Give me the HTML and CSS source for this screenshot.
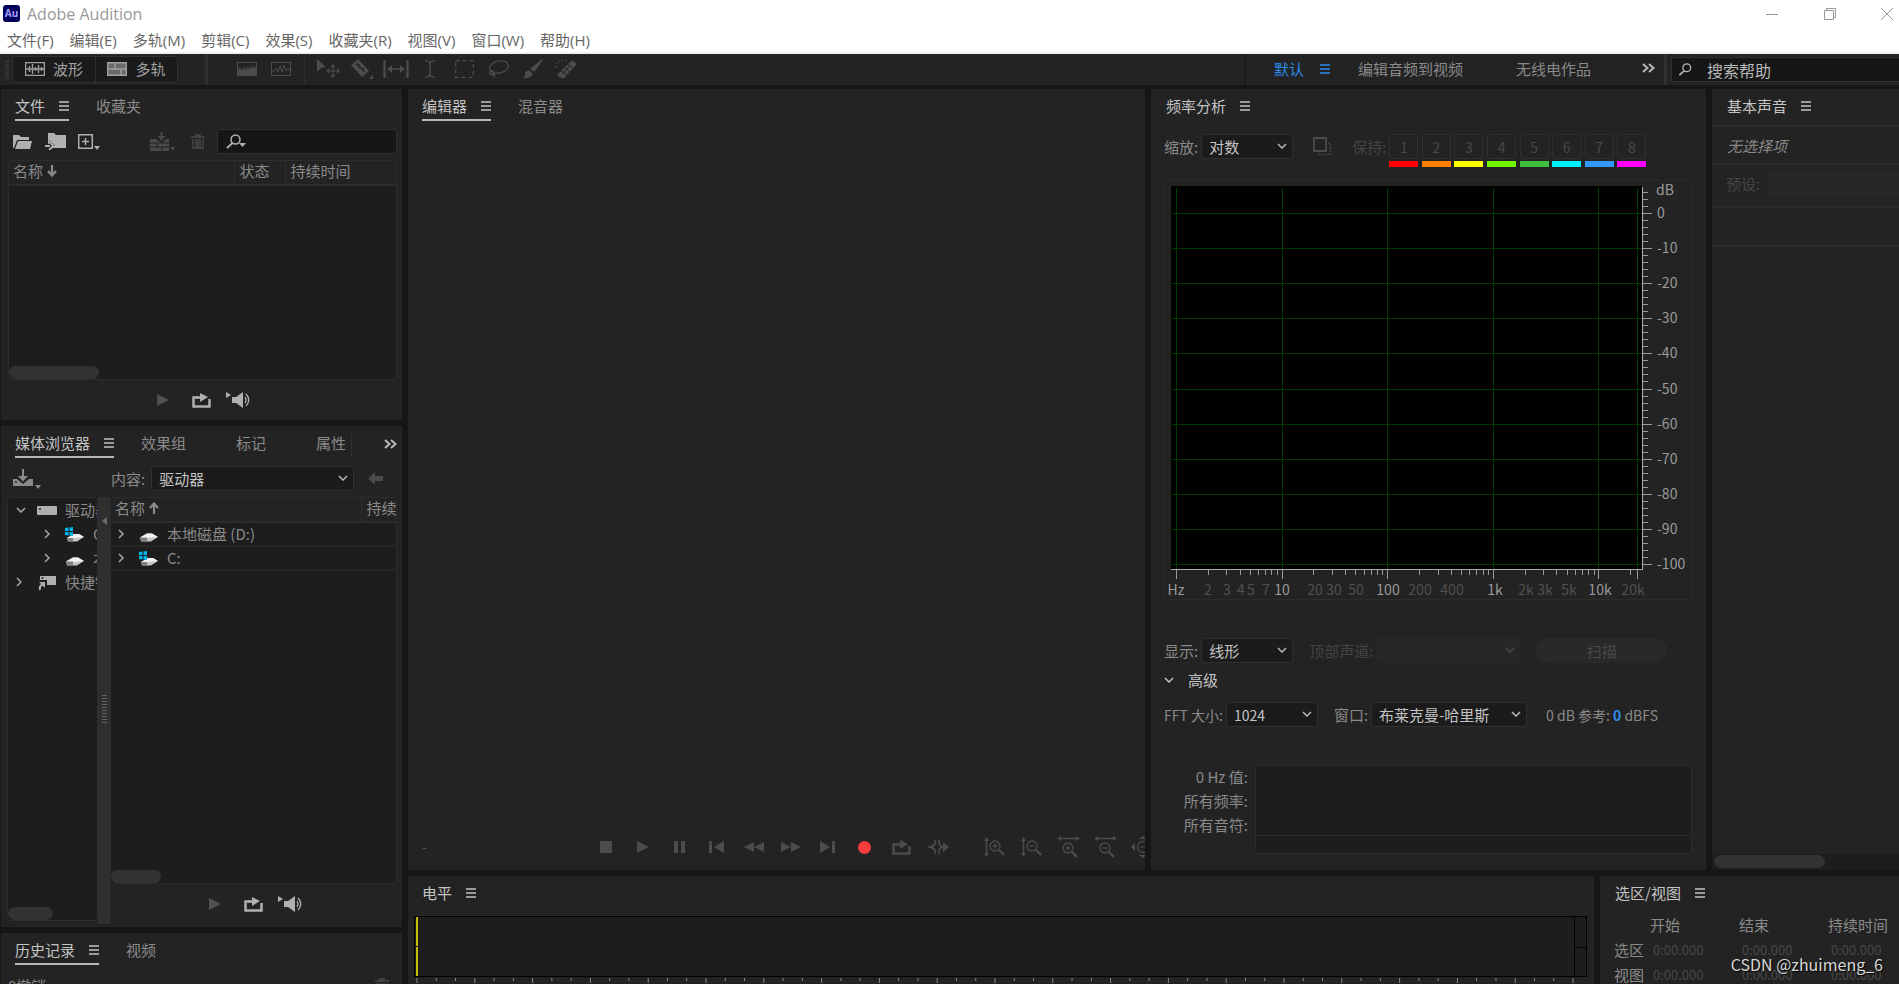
FILE: index.html
```html
<!DOCTYPE html>
<html lang="zh-CN">
<head>
  <meta charset="UTF-8" />
  <meta name="viewport" content="width=device-width, initial-scale=1.0"/>
  <title>Adobe Audition</title>
  <link rel="stylesheet" href="styles.css">
</head>
<body>
  <!-- icon set -->
  <svg class="icon-defs" aria-hidden="true">
    <symbol id="i-menu" viewBox="0 0 10 10"><path d="M0 1h10M0 5h10M0 9h10" stroke="currentColor" stroke-width="1.6"/></symbol>
    <symbol id="i-down" viewBox="0 0 10 6"><path d="M1 1l4 4 4-4" fill="none" stroke="currentColor" stroke-width="1.5"/></symbol>
    <symbol id="i-right" viewBox="0 0 6 10"><path d="M1 1l4 4-4 4" fill="none" stroke="currentColor" stroke-width="1.5"/></symbol>
    <symbol id="i-more" viewBox="0 0 13 10"><path d="M1 1l4.500 4L1 9M7 1l4.500 4L7 9" fill="none" stroke="currentColor" stroke-width="2"/></symbol>
    <symbol id="i-search" viewBox="0 0 15 15"><circle cx="9.500" cy="5.500" r="4.500" fill="none" stroke="currentColor" stroke-width="1.5"/><path d="M6.500 9L1 14" stroke="currentColor" stroke-width="1.800"/></symbol>
    <symbol id="i-play" viewBox="0 0 12 12"><path d="M0 0l12 6-12 6z" fill="currentColor"/></symbol>
    <symbol id="i-loop" viewBox="0 0 19 15"><path d="M6 4.500H1.500v9h16V6" fill="none" stroke="currentColor" stroke-width="2.500"/><path d="M4 4.500h5" stroke="currentColor" stroke-width="2.500"/><path d="M8 0l8 4-8 5z" fill="currentColor"/></symbol>
    <symbol id="i-speaker" viewBox="0 0 26 16"><path d="M0 0l5 3-5 3zM6 5h4l7-5v16l-7-5H6z" fill="currentColor"/><path d="M19 5q2 3 0 6M20 2q5.500 6 0 12" fill="none" stroke="currentColor" stroke-width="1.300"/></symbol>
    <symbol id="i-trash" viewBox="0 0 14 15"><path d="M0 3h14M5 3V1h4v2M2 5v9h10V5M5 5v8M7 5v8M9 5v8" fill="none" stroke="currentColor" stroke-width="1.300"/></symbol>
    <symbol id="i-drive" viewBox="0 0 20 9"><rect width="20" height="9" rx="1" fill="currentColor"/><circle cx="3" cy="3" r="1" fill="#222"/></symbol>
    <symbol id="i-disk" viewBox="0 0 20 15"><path d="M1 10.500l7-4h5l6 3.500-7 4.500H2z" fill="#c4c4c4"/><path d="M1 10.500l7-4h5l6 3.500-10 1z" fill="#f2f2f2"/><path d="M1 10.500h7v4H2z" fill="#808080"/></symbol>
    <symbol id="i-windisk" viewBox="0 0 20 15"><path d="M2 11l7-4h5l5 3-7 4.500H3z" fill="#c4c4c4"/><path d="M2 11l7-4h5l5 3-9 1z" fill="#f2f2f2"/><path d="M2 11h6v3.500H3z" fill="#808080"/><path d="M0 1l3.500-.500V4H0zM4.500.400L8 0v4H4.500zM0 5h3.500v3.500L0 8zM4.500 5H8v4l-3.500-.500z" fill="#00b4f0"/></symbol>
    <symbol id="i-zoom" viewBox="0 0 16 16"><circle cx="6" cy="6" r="5" fill="none" stroke="currentColor" stroke-width="1.300"/><path d="M3.500 6h5" stroke="currentColor" stroke-width="1.300"/><path d="M10 10l5 5" stroke="currentColor" stroke-width="2.400"/></symbol>
    <symbol id="i-vert" viewBox="0 0 5 20"><path d="M2.500 2v16" stroke="currentColor" stroke-width="1.500"/><path d="M0 4l2.500-4L5 4zM0 16l2.500 4L5 16z" fill="currentColor"/></symbol>
    <symbol id="i-horiz" viewBox="0 0 23 5"><path d="M2 2.500h19" stroke="currentColor" stroke-width="1.500"/><path d="M4 0L0 2.500 4 5zM19 0l4 2.500L19 5z" fill="currentColor"/></symbol>
  </svg>

  <header class="titlebar">
    <svg class="logo" viewBox="0 0 17 17"><rect width="17" height="17" rx="3" fill="#00005b"/><text x="8.500" y="12" text-anchor="middle" font-size="10" font-weight="700" fill="#a5a0ff">Au</text></svg>
    <h1>Adobe Audition</h1>
    <div class="window-buttons">
      <button aria-label="最小化"><svg width="12" height="14"><path d="M0 7.500h12" stroke="currentColor"/></svg></button>
      <button aria-label="还原"><svg width="12" height="12" fill="none" stroke="currentColor"><path d="M.500 2.500h9v9h-9zM2.500 2.500v-2h9v9h-2"/></svg></button>
      <button aria-label="关闭"><svg width="12" height="12" stroke="currentColor"><path d="M0 0l12 12M12 0L0 12"/></svg></button>
    </div>
  </header>

  <nav class="menubar">
    <button>文件(F)</button>
    <button>编辑(E)</button>
    <button>多轨(M)</button>
    <button>剪辑(C)</button>
    <button>效果(S)</button>
    <button>收藏夹(R)</button>
    <button>视图(V)</button>
    <button>窗口(W)</button>
    <button>帮助(H)</button>
  </nav>

  <div class="toolbar">
    <span class="grip"></span>
    <div class="view-toggle">
      <button><svg width="20" height="14" fill="none" stroke="currentColor"><rect x=".500" y=".500" width="19" height="13" stroke-width="1.500"/><path d="M1 7h18M4.500 4v6M7.500 2v10M10.500 5v4M13.500 3v8M16.500 5v4" stroke-width="1.400"/></svg>波形</button>
      <button><svg width="20" height="14"><path d="M0 0h20v14H0z" fill="currentColor" opacity=".600"/><path d="M.700.700h18.600v12.600H.700zM1 7h18M8 1v6M14 7v6" fill="none" stroke="currentColor" stroke-width="1.400"/></svg>多轨</button>
    </div>
    <span class="bar"></span>
    <div class="tools display-tools">
      <button aria-label="频谱"><svg width="20" height="14"><rect x=".500" y=".500" width="19" height="13" fill="none" stroke="currentColor"/><path d="M1 13V6l1 2 1-4 1 5 1-3 1 3 1-6 1 5 1-3 1 3 1-5 1 5 1-4 1 4 1-6 1 5 1-3 1 3 1-4 1 2v8z" fill="currentColor"/></svg></button>
      <button aria-label="音高"><svg width="20" height="14" fill="none" stroke="currentColor"><rect x=".500" y=".500" width="19" height="13"/><path d="M1 9h2l2-3 2 4 2-6 2 6 2-7 2 6 2-3 2 3"/></svg></button>
    </div>
    <span class="thin-bar"></span>
    <div class="tools">
      <button aria-label="移动"><svg width="24" height="20"><path d="M1 0l9 8-5 1-4 4z" fill="currentColor"/><path d="M17 6v12M11 12h12M15 8l2-2 2 2M15 16l2 2 2-2M13 10l-2 2 2 2M21 10l2 2-2 2" fill="none" stroke="currentColor" stroke-width="1.200"/></svg></button>
      <button aria-label="切断所选剪辑"><svg width="22" height="20"><path d="M0 6l7-6 11 12-7 6z" fill="currentColor"/><path d="M5 5l3 1 1 3 3 1 1 3" fill="none" stroke="#222" stroke-width="1.500"/><path d="M22 16v4h-4z" fill="currentColor"/></svg></button>
      <button aria-label="滑动"><svg width="26" height="18"><path d="M1.500 0v18M24.500 0v18" stroke="currentColor" stroke-width="2.200"/><path d="M7 9h12" stroke="currentColor" stroke-width="1.500"/><path d="M4 9l5-4v8zM22 9l-5-4v8z" fill="currentColor"/></svg></button>
      <button aria-label="时间选择"><svg width="10" height="18" fill="none" stroke="currentColor" stroke-width="1.300"><path d="M0 .700q4.500 0 5 3v10.500q-.500 3-5 3M10 .700q-4.500 0-5 3v10.500q.500 3 5 3"/></svg></button>
      <button aria-label="框选"><svg width="19" height="18"><path d="M.700.700h17.600v16.600H.700z" fill="none" stroke="currentColor" stroke-width="1.300" stroke-dasharray="4 3"/></svg></button>
      <button aria-label="套索"><svg width="21" height="19" fill="none" stroke="currentColor" stroke-width="1.300"><ellipse cx="11" cy="7" rx="9.500" ry="6" transform="rotate(-12 11 7)"/><circle cx="4" cy="13" r="2"/><path d="M4 13q4 1 2 5"/></svg></button>
      <button aria-label="画笔"><svg width="21" height="20" fill="currentColor"><path d="M20 0l1 1-9 12-4-3zM7 11l4 4q-2 5-11 4 3-1 3-4t4-4z"/></svg></button>
      <button aria-label="修复"><svg width="22" height="20"><path d="M17 1l5 4L8 20l-6-4z" fill="currentColor"/><path d="M9 8l6 5M12 5l6 4M6 12l6 4M14 7l-6 8" stroke="#222" stroke-width="1"/><path d="M1 9q0-8 8-8l4 2" fill="none" stroke="currentColor" stroke-width="1.300" stroke-dasharray="1.500 2"/></svg></button>
    </div>
    <div class="workspaces">
      <button class="on">默认 <svg class="i-menu"><use href="#i-menu"/></svg></button>
      <button>编辑音频到视频</button>
      <button>无线电作品</button>
      <button class="more" aria-label="更多工作区"><svg width="13" height="10"><use href="#i-more"/></svg></button>
    </div>
    <label class="help-search">
      <svg width="15" height="15"><use href="#i-search"/></svg>
      <input type="text" placeholder="搜索帮助" aria-label="搜索帮助">
    </label>
  </div>

  <main class="workspace">
    <div class="left-col">
      <section class="panel files">
        <div class="tabs">
          <button class="tab active">文件<svg class="i-menu"><use href="#i-menu"/></svg></button>
          <button class="tab">收藏夹</button>
        </div>
        <div class="file-tools">
          <button aria-label="打开文件"><svg width="20" height="14" fill="currentColor"><path d="M0 0h6l2 2h8v3H4L1 13H0z"/><path d="M5 6h14l-2 8H2z"/></svg></button>
          <button aria-label="导入文件"><svg width="21" height="17"><path d="M3 0h6l2 2h10v13H3z" fill="currentColor"/><path d="M0 16q0-5 4-5V7l6 5.500-6 4.500z" fill="#232323"/><path d="M0 13h5M4 8.500L8.500 13 4 17" fill="none" stroke="currentColor" stroke-width="2"/></svg></button>
          <button aria-label="新建文件"><svg width="22" height="16"><path d="M.700.700h13.600v13.600H.700zM7.500 4v7M4 7.500h7" fill="none" stroke="currentColor" stroke-width="1.500"/><path d="M16 12h6l-3 4z" fill="currentColor"/></svg></button>
          <button class="off insert" aria-label="插入到多轨混音"><svg width="25" height="19" fill="currentColor"><path d="M0 7h6l5.500 4L16 7h3v12H0z"/><path d="M10.500 0h2v4h3l-4 5-4-5h3zM20 15h5l-2.500 4z"/><path d="M0 11h19M0 15h19M7 11v4M12 15v4" stroke="#222" stroke-width="1"/></svg></button>
          <button class="off" aria-label="删除"><svg width="14" height="15"><use href="#i-trash"/></svg></button>
          <label class="file-search">
            <svg width="21" height="15"><use href="#i-search" width="15" height="15"/><path d="M13 9h7l-3.500 4z" fill="currentColor"/></svg>
            <input type="text" aria-label="搜索文件">
          </label>
        </div>
        <div class="list-box">
          <table>
            <thead><tr><th>名称<svg class="sort" viewBox="0 0 10 12"><path d="M5 0v10M1 6l4 4.500L9 6" fill="none" stroke="currentColor" stroke-width="2.200"/></svg></th><th class="c-state">状态</th><th class="c-time">持续时间</th></tr></thead>
          </table>
          <span class="thumb wide"></span>
        </div>
        <div class="preview">
          <button class="off" aria-label="播放"><svg width="12" height="12"><use href="#i-play"/></svg></button>
          <button aria-label="循环播放"><svg width="19" height="15"><use href="#i-loop"/></svg></button>
          <button aria-label="自动播放"><svg width="26" height="16"><use href="#i-speaker"/></svg></button>
        </div>
      </section>

      <section class="panel media">
        <div class="tabs">
          <button class="tab active">媒体浏览器<svg class="i-menu"><use href="#i-menu"/></svg></button>
          <button class="tab">效果组</button>
          <button class="tab">标记</button>
          <button class="tab last">属性</button>
          <button class="more" aria-label="更多面板"><svg width="13" height="10"><use href="#i-more"/></svg></button>
        </div>
        <div class="media-tools">
          <button aria-label="导入"><svg width="28" height="20"><path d="M0 10h20v7H0z" fill="currentColor"/><path d="M8 6h4v4h4l-6 5-6-5h4z" fill="#232323"/><path d="M9 0h2v7h4l-5 5.500L5 7h4zM22 16h6l-3 4z" fill="currentColor"/><circle cx="3" cy="13" r="1" fill="#232323"/></svg></button>
          <label for="content">内容:</label>
          <span class="select"><select id="content"><option>驱动器</option></select><svg><use href="#i-down"/></svg></span>
          <button class="off" aria-label="后退"><svg width="15" height="13" fill="currentColor"><path d="M0 6.500L7 0v4h8v5H7v4z"/></svg></button>
        </div>
        <div class="media-body">
          <ul class="tree">
            <li><svg class="chev down"><use href="#i-down"/></svg><svg class="drive"><use href="#i-drive"/></svg>驱动器</li>
            <li class="sub"><svg class="chev"><use href="#i-right"/></svg><svg class="disk"><use href="#i-windisk"/></svg>C:</li>
            <li class="sub"><svg class="chev"><use href="#i-right"/></svg><svg class="disk"><use href="#i-disk"/></svg>本地磁盘 (D:)</li>
            <li><svg class="chev"><use href="#i-right"/></svg><svg class="shortcut" viewBox="0 0 20 15"><path d="M3 1h16v9H10V5H3z" fill="currentColor"/><circle cx="5.500" cy="3" r="1" fill="#222"/><path d="M3 15q-1-4 3-6" fill="none" stroke="currentColor" stroke-width="2"/><path d="M2 7h6v6z" fill="currentColor"/></svg>快捷键</li>
            <li class="thumb narrow"></li>
          </ul>
          <div class="splitter"><svg width="5" height="8"><path d="M5 0v8L0 4z" fill="currentColor"/></svg><span></span></div>
          <div class="media-list">
            <div class="list-box">
              <table>
                <thead><tr><th>名称<svg class="sort" viewBox="0 0 10 12"><path d="M5 12V2M1 6l4-4.500L9 6" fill="none" stroke="currentColor" stroke-width="2.200"/></svg></th><th class="c-dur">持续时间</th></tr></thead>
                <tbody>
                  <tr><td colspan="2"><span class="row"><svg class="chev"><use href="#i-right"/></svg><svg class="disk"><use href="#i-disk"/></svg>本地磁盘 (D:)</span></td></tr>
                  <tr><td colspan="2"><span class="row"><svg class="chev"><use href="#i-right"/></svg><svg class="disk"><use href="#i-windisk"/></svg>C:</span></td></tr>
                </tbody>
              </table>
              <span class="thumb"></span>
            </div>
            <div class="preview">
              <button class="off" aria-label="播放"><svg width="12" height="12"><use href="#i-play"/></svg></button>
              <button aria-label="循环播放"><svg width="19" height="15"><use href="#i-loop"/></svg></button>
              <button aria-label="自动播放"><svg width="26" height="16"><use href="#i-speaker"/></svg></button>
            </div>
          </div>
        </div>
      </section>

      <section class="panel history">
        <div class="tabs">
          <button class="tab active">历史记录<svg class="i-menu"><use href="#i-menu"/></svg></button>
          <button class="tab">视频</button>
        </div>
        <div class="history-foot">
          <span>0撤销</span>
          <button class="off" aria-label="清除历史"><svg width="14" height="15"><use href="#i-trash"/></svg></button>
        </div>
      </section>
    </div>

    <div class="main-col">
      <div class="upper">
        <section class="panel editor">
          <div class="tabs">
            <button class="tab active">编辑器<svg class="i-menu"><use href="#i-menu"/></svg></button>
            <button class="tab">混音器</button>
          </div>
          <div class="transport">
            <span class="time">-</span>
            <button aria-label="停止"><svg width="12" height="12" fill="currentColor"><path d="M0 0h12v12H0z"/></svg></button>
            <button aria-label="播放"><svg width="12" height="12"><use href="#i-play"/></svg></button>
            <button aria-label="暂停"><svg width="11" height="12" fill="currentColor"><path d="M0 0h4v12H0zM7 0h4v12H7z"/></svg></button>
            <button aria-label="上一个"><svg width="15" height="12" fill="currentColor"><path d="M0 0h3v12H0zM15 0v12L5 6z"/></svg></button>
            <button aria-label="快退"><svg width="20" height="10" fill="currentColor"><path d="M10 0v10L0 5zM20 0v10L10 5z"/></svg></button>
            <button aria-label="快进"><svg width="20" height="10" fill="currentColor"><path d="M0 0l10 5-10 5zM10 0l10 5-10 5z"/></svg></button>
            <button aria-label="下一个"><svg width="15" height="12" fill="currentColor"><path d="M12 0h3v12h-3zM0 0l10 6-10 6z"/></svg></button>
            <button class="record" aria-label="录制"><svg width="13" height="13"><circle cx="6.500" cy="6.500" r="6.500" fill="#f73c3c"/></svg></button>
            <button aria-label="循环"><svg width="19" height="15"><use href="#i-loop"/></svg></button>
            <button aria-label="跳过所选"><svg width="21" height="14"><path d="M7 0v4L3 7l4 3v4M11 0v4l3 3-3 3v4M0 7h6M12 7h5" fill="none" stroke="currentColor" stroke-width="1.600"/><path d="M15 2l6 5-6 5z" fill="currentColor"/></svg></button>
            <button class="zoom-first" aria-label="放大振幅"><svg width="21" height="20"><use href="#i-vert" width="5" height="20"/><use href="#i-zoom" x="5" y="3" width="16" height="16"/><path d="M11 6.500v5" stroke="currentColor" stroke-width="1.300"/></svg></button>
            <button aria-label="缩小振幅"><svg width="21" height="20"><use href="#i-vert" width="5" height="20"/><use href="#i-zoom" x="5" y="3" width="16" height="16"/></svg></button>
            <button aria-label="放大时间"><svg width="23" height="22"><use href="#i-horiz" width="23" height="5"/><use href="#i-zoom" x="5" y="6" width="16" height="16"/><path d="M11 9.500v5" stroke="currentColor" stroke-width="1.300"/></svg></button>
            <button aria-label="缩小时间"><svg width="23" height="22"><use href="#i-horiz" width="23" height="5"/><use href="#i-zoom" x="5" y="6" width="16" height="16"/></svg></button>
            <button aria-label="全部缩小"><svg width="24" height="22"><circle cx="12" cy="11" r="5.500" fill="none" stroke="currentColor" stroke-width="1.300"/><path d="M9 11h6" stroke="currentColor"/><path d="M0 11l4-4v8zM24 11l-4-4v8zM12 0l4 3H8zM12 22l4-3H8z" fill="currentColor"/></svg></button>
          </div>
        </section>

        <section class="panel frequency">
          <h2 class="heading">频率分析<svg class="i-menu"><use href="#i-menu"/></svg></h2>
          <div class="controls scale-row">
            <label for="scale">缩放:</label>
            <span class="select short"><select id="scale"><option>对数</option></select><svg><use href="#i-down"/></svg></span>
            <button class="copy off" aria-label="复制"><svg width="19" height="20" fill="none" stroke="currentColor"><path d="M1 1h12v13H1z" stroke-width="1.800"/><path d="M15 6.500h2.500v11h-11V16" stroke-width="1.500" stroke-dasharray="1.500 1.500"/></svg></button>
            <span class="hold-label">保持:</span>
            <div class="holds" id="holds"></div>
          </div>
          <svg class="graph" id="graph" width="528" height="420"></svg>
          <div class="controls display-row">
            <label for="display">显示:</label>
            <span class="select short"><select id="display"><option>线形</option></select><svg><use href="#i-down"/></svg></span>
            <label class="dim next" for="channel">顶部声道:</label>
            <span class="select disabled channel"><select id="channel" disabled></select><svg><use href="#i-down"/></svg></span>
            <button class="scan" disabled>扫描</button>
          </div>
          <button class="advanced"><svg width="10" height="6"><use href="#i-down"/></svg>高级</button>
          <div class="controls">
            <label class="num" for="fft">FFT 大小:</label>
            <span class="select short"><select id="fft" class="num"><option>1024</option></select><svg><use href="#i-down"/></svg></span>
            <label class="next" for="window">窗口:</label>
            <span class="select long"><select id="window"><option>布莱克曼-哈里斯</option></select><svg><use href="#i-down"/></svg></span>
            <span class="reference num">0 dB 参考: <b>0</b> dBFS</span>
          </div>
          <div class="results">
            <div class="result-labels">
              <span>0 Hz 值:</span>
              <span>所有频率:</span>
              <span>所有音符:</span>
            </div>
            <div class="result-box"></div>
          </div>
        </section>

        <section class="panel sound">
          <h2 class="heading">基本声音<svg class="i-menu"><use href="#i-menu"/></svg></h2>
          <p class="none">无选择项</p>
          <div class="preset">
            <label for="preset">预设:</label>
            <select id="preset" disabled></select>
          </div>
          <div class="sound-blank"></div>
          <div class="track"><span class="thumb"></span></div>
        </section>
      </div>

      <div class="lower">
        <section class="panel levels">
          <h2 class="heading">电平<svg class="i-menu"><use href="#i-menu"/></svg></h2>
          <div class="meter">
            <div class="bars"><span></span><span></span></div>
            <div class="clip"><span></span><span></span></div>
          </div>
          <svg class="scale" id="levelScale"></svg>
        </section>

        <section class="panel selection">
          <h2 class="heading">选区/视图<svg class="i-menu"><use href="#i-menu"/></svg></h2>
          <table>
            <thead><tr><th></th><th>开始</th><th>结束</th><th>持续时间</th></tr></thead>
            <tbody>
              <tr><th>选区</th><td>0:00.000</td><td>0:00.000</td><td>0:00.000</td></tr>
              <tr><th>视图</th><td>0:00.000</td><td>0:00.000</td><td>0:00.000</td></tr>
            </tbody>
          </table>
        </section>
      </div>
    </div>
  </main>
  <div class="watermark">CSDN @zhuimeng_6</div>

  <script src="script.js"></script>
</body>
</html>
```
FILE: styles.css
```css
* {
  box-sizing: border-box;
  margin: 0;
  padding: 0;
}
body {
  font-family: "Noto Sans CJK SC", "Noto Sans", sans-serif;
  font-size: 15px;
  line-height: 24px;
  color: #8a8a8a;
  background: #161616;
  height: 100vh;
  overflow: hidden;
  display: flex;
  flex-direction: column;
}
button, input, select {
  font: inherit;
  color: inherit;
  background: none;
  border: none;
  outline: none;
}
button {
  display: flex;
  align-items: center;
  justify-content: center;
  white-space: nowrap;
}
svg {
  flex: none;
  display: block;
}
.icon-defs {
  position: absolute;
  width: 0;
  height: 0;
}
.i-menu {
  width: 10px;
  height: 10px;
  margin-left: 14px;
}
.off {
  color: #4a4a4a;
}
.num {
  font-size: 14px;
}

/* window chrome */
.titlebar {
  background: #fff;
  height: 28px;
  display: flex;
  align-items: center;
  padding-left: 3px;
}
.titlebar h1 {
  font-family: "Open Sans", sans-serif;
  font-size: 16px;
  font-weight: 400;
  color: #999;
  margin-left: 7px;
  flex: 1;
}
.logo {
  width: 17px;
  height: 17px;
  margin-bottom: 2px;
  font-family: "Open Sans", sans-serif;
}
.window-buttons {
  display: flex;
  color: #999;
}
.window-buttons button {
  width: 58px;
  height: 28px;
}
.window-buttons button:last-child {
  width: 40px;
  padding-left: 16px;
}
.menubar {
  background: #fff;
  border-bottom: 2px solid #f0f0f0;
  height: 26px;
  display: flex;
  gap: 16px;
  padding-left: 7px;
  color: #666;
  font-family: "Open Sans", "Noto Sans CJK SC", sans-serif;
}

/* toolbar */
.toolbar {
  background: #232323;
  height: 31px;
  flex: none;
  display: flex;
  align-items: center;
}
.toolbar button {
  padding-bottom: 1px;
}
.grip {
  width: 4px;
  height: 20px;
  margin: 0 3px 0 5px;
  background: repeating-linear-gradient(#3a3a3a 0 1px, #232323 1px 2px);
}
.view-toggle {
  display: flex;
  height: 27px;
  background: #1b1b1b;
  border: 1px solid #303030;
  border-radius: 3px;
}
.view-toggle button {
  width: 82px;
  gap: 8px;
  color: #a0a0a0;
}
.view-toggle button + button {
  border-left: 1px solid #303030;
}
.bar {
  width: 3px;
  height: 31px;
  background: #303030;
  margin: 0 22px 0 27px;
}
.thin-bar {
  width: 1px;
  height: 26px;
  background: #303030;
  margin: 0 6px;
}
.tools {
  display: flex;
  color: #4c4c4c;
}
.tools button {
  width: 34px;
  height: 27px;
}
.workspaces {
  margin-left: auto;
  height: 31px;
  display: flex;
  align-items: center;
  padding-left: 28px;
  border-left: 2px solid #1b1b1b;
}
.workspaces button + button {
  margin-left: 53px;
}
.workspaces button.on {
  color: #2d8ceb;
  margin-right: -25px;
}
.workspaces .i-menu {
  margin-left: 16px;
}
.workspaces button.more {
  margin-left: 51px;
  padding-bottom: 3px;
}
.more {
  color: #b8b8b8;
}
.help-search {
  align-self: stretch;
  width: 235px;
  display: flex;
  align-items: center;
  border-left: 3px solid #303030;
  margin-left: 9px;
  padding: 0 0 0 4px;
  color: #b8b8b8;
}
.help-search svg {
  width: 28px;
  height: 25px;
  padding: 5px 7px 5px 6px;
  background: #161616;
  border: 1px solid #303030;
  border-right: none;
}
.help-search input {
  flex: 1;
  min-width: 0;
  height: 25px;
  padding-left: 8px;
  font-size: 16px;
  background: #161616;
  border: solid #303030;
  border-width: 1px 0;
}
.help-search input::placeholder {
  color: #b8b8b8;
}

/* panels */
.workspace {
  flex: 1;
  min-height: 0;
  display: flex;
  gap: 6px;
  padding: 4px 0 0 1px;
}
.panel {
  background: #232323;
  overflow: hidden;
  display: flex;
  flex-direction: column;
}
.left-col {
  width: 401px;
  flex: none;
  display: flex;
  flex-direction: column;
  gap: 6px;
}
.main-col {
  flex: 1;
  min-width: 0;
  display: flex;
  flex-direction: column;
  gap: 6px;
}
.upper, .lower {
  display: flex;
  gap: 6px;
  min-height: 0;
}
.upper {
  flex: 1;
}
.lower {
  flex: 0 0 108px;
}
.tabs {
  flex: none;
  display: flex;
  gap: 27px;
  padding: 7px 7px 0 14px;
}
.tab {
  height: 25px;
  padding: 0 23px 4px 0;
  border-bottom: 2px solid transparent;
}
.tab.active {
  color: #c4c4c4;
  padding-right: 0;
  border-bottom-color: #b8b8b8;
}
.heading {
  flex: none;
  display: flex;
  align-items: center;
  height: 36px;
  padding: 0 0 2px 15px;
  font-size: 15px;
  font-weight: 400;
  color: #c4c4c4;
}
.list-box {
  flex: 1;
  min-height: 0;
  position: relative;
  background: #1d1d1d;
  border: 1px solid #2c2c2c;
  border-radius: 3px;
  overflow: hidden;
}
.list-box table {
  width: 100%;
  table-layout: fixed;
  border-collapse: collapse;
}
.list-box th {
  height: 24px;
  line-height: 20px;
  vertical-align: top;
  font-weight: 400;
  text-align: left;
  white-space: nowrap;
  overflow: hidden;
  background: #232323;
  border-bottom: 2px solid #2c2c2c;
  padding-left: 4px;
}
.list-box th + th {
  border-left: 1px solid #2c2c2c;
  padding-left: 5px;
}
.list-box td {
  height: 24px;
  border-bottom: 2px solid #262626;
}
.sort {
  display: inline-block;
  width: 10px;
  height: 12px;
  margin-left: 4px;
}
.thumb {
  display: block;
  height: 13px;
  width: 50px;
  border-radius: 7px;
  background: #323232;
}
.list-box .thumb, .tree .thumb {
  position: absolute;
  left: 0;
  bottom: 0;
}
.list-box .thumb.wide {
  width: 90px;
}
.preview {
  flex: none;
  height: 40px;
  display: flex;
  align-items: center;
  justify-content: center;
  gap: 15px;
  padding-left: 6px;
  color: #b0b0b0;
}
.preview .off {
  color: #505050;
  margin-right: 8px;
}

/* files */
.files {
  flex: 0 0 331px;
}
.file-tools {
  display: flex;
  align-items: center;
  height: 25px;
  margin: 8px 5px 6px 12px;
  gap: 12px;
  color: #b0b0b0;
}
.file-tools .insert {
  margin: 0 4px 0 38px;
}
.file-search {
  flex: 1;
  min-width: 0;
  display: flex;
  align-items: center;
  height: 25px;
  padding-left: 8px;
  background: #161616;
  border: 1px solid #303030;
  border-radius: 3px;
}
.file-search input {
  flex: 1;
  min-width: 0;
}
.files .list-box {
  margin: 0 5px 0 7px;
}
.c-state {
  width: 51px;
}
.c-time {
  width: 111px;
}

/* media browser */
.media {
  flex: 1;
  min-height: 0;
}
.media .tab.last {
  padding-right: 5px;
  border-right: 1px solid #303030;
}
.media .more {
  margin-left: 5px;
  padding-bottom: 4px;
}
.media-tools {
  flex: none;
  display: flex;
  align-items: center;
  height: 25px;
  margin: 8px 0 6px 12px;
}
.media-tools label {
  margin-left: 70px;
}
.media-tools .select {
  width: 203px;
  margin: 0 14px 0 6px;
}
.select {
  position: relative;
  display: block;
  flex: none;
  height: 25px;
  margin-left: 3px;
}
.select select {
  appearance: none;
  width: 100%;
  height: 25px;
  padding: 0 0 1px 7px;
  color: #c4c4c4;
  background: #1b1b1b;
  border: 1px solid #303030;
  border-radius: 3px;
}
.select svg {
  position: absolute;
  right: 6px;
  top: 9px;
  width: 10px;
  height: 6px;
  color: #b8b8b8;
  pointer-events: none;
}
.select.disabled select {
  background: #292929;
  border-color: #292929;
}
.select.disabled svg {
  color: #4a4a4a;
}
.media-body {
  flex: 1;
  min-height: 0;
  display: flex;
  padding: 0 5px 3px 6px;
}
.tree {
  position: relative;
  width: 91px;
  margin-bottom: 3px;
  list-style: none;
  overflow: hidden;
  background: #1d1d1d;
  border: 1px solid #2c2c2c;
  border-radius: 3px;
}
.tree li, .row {
  display: flex;
  align-items: center;
  height: 24px;
  white-space: nowrap;
}
.tree li {
  padding-left: 8px;
}
.tree li.sub {
  padding-left: 36px;
}
.row {
  height: 22px;
  padding-left: 7px;
}
.chev {
  width: 6px;
  height: 10px;
  margin-right: 15px;
  color: #a8a8a8;
}
.chev.down {
  width: 10px;
  height: 6px;
  margin-right: 11px;
}
.drive, .disk, .shortcut {
  width: 20px;
  height: 15px;
  margin-right: 8px;
  color: #b0b0b0;
}
.tree .thumb.narrow {
  width: 45px;
  height: 13px;
}
.splitter {
  width: 12px;
  background: #2f2f2f;
  color: #6a6a6a;
  display: flex;
  flex-direction: column;
  align-items: center;
  padding-top: 20px;
}
.splitter span {
  width: 5px;
  height: 30px;
  margin-top: 170px;
  background: repeating-linear-gradient(#606060 0 1px, #2f2f2f 1px 3px);
}
.media-list {
  flex: 1;
  min-width: 0;
  display: flex;
  flex-direction: column;
}
.c-dur {
  width: 35px;
}

/* history */
.history {
  flex: 0 0 51px;
}
.history-foot {
  flex: none;
  display: flex;
  justify-content: space-between;
  align-items: center;
  height: 25px;
  margin: 8px 13px 0 7px;
}

/* editor */
.editor {
  flex: 1;
  min-width: 0;
}
.transport {
  margin-top: auto;
  height: 46px;
  display: flex;
  align-items: center;
  padding-left: 14px;
  color: #4c4c4c;
}
.transport .time {
  width: 165px;
  flex: none;
}
.transport button {
  flex: 0 0 37px;
}
.transport .zoom-first {
  margin-left: 19px;
}

/* frequency analysis */
.frequency {
  flex: 0 0 555px;
  padding: 0 14px 0 13px;
}
.frequency .heading {
  padding-left: 2px;
}
.controls {
  flex: none;
  display: flex;
  align-items: center;
  height: 25px;
  white-space: nowrap;
}
.scale-row {
  margin-top: 9px;
}
.select.short {
  width: 92px;
}
.select.long {
  width: 156px;
}
.select.channel {
  width: 145px;
}
.next {
  margin-left: 16px;
}
.dim {
  color: #444;
}
.copy {
  margin: 0 20px;
}
.hold-label {
  color: #444;
  margin-right: 3px;
}
.holds {
  flex: 0 0 257px;
  display: flex;
  justify-content: space-between;
}
.hold {
  width: 29px;
  height: 25px;
  position: relative;
  border: 1px solid #303030;
  border-radius: 3px;
  font-size: 14px;
  color: #484848;
}
.hold span {
  position: absolute;
  left: -1px;
  right: -1px;
  top: 26px;
  height: 6px;
}
.graph {
  margin: 21px 0 38px;
  border: 1px solid #2c2c2c;
  font-size: 14px;
  fill: #9a9a9a;
}
.graph .minor {
  fill: #505050;
}
.scan {
  width: 131px;
  height: 25px;
  margin-left: 15px;
  border-radius: 13px;
  background: #292929;
  color: #484848;
}
.advanced {
  align-self: flex-start;
  height: 24px;
  margin: 5px 0 10px;
  gap: 14px;
  color: #c4c4c4;
}
.reference {
  margin-left: 19px;
}
.reference b {
  color: #2d8ceb;
}
.results {
  display: flex;
  margin-top: 38px;
}
.result-labels {
  width: 84px;
  margin-right: 7px;
  text-align: right;
}
.result-labels span {
  display: block;
}
.result-box {
  flex: 1;
  height: 89px;
  border: 1px solid #2c2c2c;
  border-radius: 3px;
  background: linear-gradient(#2a2a2a, #2a2a2a) 0 69px / 100% 1px no-repeat #1d1d1d;
}

/* essential sound */
.sound {
  flex: 0 0 187px;
}
.none {
  height: 38px;
  line-height: 38px;
  padding-left: 15px;
  font-style: italic;
  border-top: 2px solid #2a2a2a;
}
.preset {
  display: flex;
  align-items: center;
  height: 45px;
  padding: 0 0 4px 14px;
  color: #444;
  white-space: nowrap;
  border: solid #2a2a2a;
  border-width: 2px 0;
}
.preset select {
  appearance: none;
  flex: 1;
  height: 25px;
  margin-left: 7px;
  background: #292929;
}
.sound-blank {
  height: 39px;
  border-bottom: 2px solid #2a2a2a;
}
.track {
  margin-top: auto;
  padding: 1px 2px 2px;
  background: #1d1d1d;
}
.track .thumb {
  width: 111px;
}

/* levels */
.levels {
  flex: 1;
  min-width: 0;
  padding: 0 7px 0 6px;
}
.levels .heading, .selection .heading {
  padding-left: 8px;
}
.meter {
  flex: none;
  height: 61px;
  margin-top: 4px;
  display: flex;
  background: #1d1d1d;
  border: 1px solid #000;
}
.bars {
  flex: 1;
  padding-left: 1px;
}
.bars span {
  display: block;
  width: 2px;
  height: 29px;
  margin-bottom: 1px;
  background: #c3bd00;
}
.clip {
  width: 12px;
  border-left: 1px solid #000;
}
.clip span {
  display: block;
  height: 30px;
}
.clip span + span {
  border-top: 1px solid #000;
}
.scale {
  width: calc(100% - 17px);
  height: 6px;
  margin-left: 3px;
  overflow: visible;
}

/* selection / view */
.selection {
  flex: 0 0 299px;
  padding-left: 7px;
}
.selection table {
  table-layout: fixed;
  width: 292px;
  border-collapse: collapse;
}
.selection th, .selection td {
  height: 25px;
  font-weight: 400;
  white-space: nowrap;
  text-align: left;
}
.selection th:first-child {
  width: 43px;
  padding-left: 7px;
}
.selection th:nth-child(2), .selection th:nth-child(3) {
  width: 89px;
}
.selection td {
  padding-left: 3px;
  font-size: 13px;
  color: #484848;
}
.watermark {
  position: absolute;
  right: 16px;
  bottom: 8px;
  font-size: 16px;
  color: #d8d8d8;
  text-shadow: 1px 1px 1px #000;
}
```
FILE: script.js
```js
const holdColors = ["#ff0000", "#ff8000", "#ffff00", "#73f500", "#3fbf3f", "#00f0ff", "#3399ff", "#ff00ff"];
const holds = document.getElementById("holds");

holdColors.forEach((color, i) => {
  const btn = document.createElement("button");
  btn.className = "hold";
  btn.innerHTML = `${i + 1}<span style="background:${color}"></span>`;
  holds.appendChild(btn);
});

// frequency graph: log x axis, linear dB axis
const left = 11;
const decade = 105.6;
const zero = 33;
const dbStep = 35.1;
const plot = { x: 6, y: 5, w: 471, h: 383 };
const axisX = plot.x + plot.w;
const axisY = plot.y + plot.h;

function freqX(hz) {
  return Math.round(left + Math.log10(hz) * decade) + 0.5;
}

function line(x1, y1, x2, y2, color) {
  return `<path d="M${x1} ${y1}L${x2} ${y2}" stroke="${color}"/>`;
}

let out = `<rect x="${plot.x}" y="${plot.y}" width="${plot.w}" height="${plot.h}" fill="#000"/>`;

[1, 10, 100, 1000, 10000, 23000].forEach(hz => {
  out += line(freqX(hz), plot.y + 2, freqX(hz), axisY, "#003c00");
});
for (let i = 0; i <= 10; i++) {
  const y = Math.round(zero + i * dbStep) - 0.5;
  out += line(plot.x + 1, y, axisX, y, "#003c00");
  out += line(axisX, y, axisX + 10, y, "#9a9a9a");
  out += `<text x="492" y="${y + 4.5}">${i ? -i * 10 : 0}</text>`;
}
for (let db = 6; db >= -98; db -= 2) {
  if (db % 10 === 0) continue;
  const y = Math.round(zero - db * dbStep / 10) - 0.5;
  out += line(axisX, y, axisX + 6, y, "#9a9a9a");
}
for (let d = 0; d < 5; d++) {
  for (let n = 1; n < 10; n++) {
    const hz = n * Math.pow(10, d);
    if (hz > 20000) break;
    out += line(freqX(hz), axisY, freqX(hz), axisY + (n === 1 ? 10 : 6), "#9a9a9a");
  }
}
out += line(freqX(23000), axisY, freqX(23000), axisY + 10, "#9a9a9a");
out += line(plot.x, axisY + 0.5, axisX + 1, axisY + 0.5, "#b0b0b0");
out += line(axisX + 0.5, plot.y + 1, axisX + 0.5, axisY, "#b0b0b0");
out += `<text x="491" y="14">dB</text>`;

const labels = [
  [11, "Hz", 1], [43, "2"], [62, "3"], [76, "4"], [86, "5"], [101, "7"], [117, "10", 1],
  [150, "20"], [169, "30"], [191, "50"], [223, "100", 1], [255, "200"], [287, "400"],
  [330, "1k", 1], [361, "2k"], [380, "3k"], [404, "5k"], [435, "10k", 1], [468, "20k"]
];
labels.forEach(([x, text, major]) => {
  out += `<text x="${x}" y="414" text-anchor="middle" class="${major ? "major" : "minor"}">${text}</text>`;
});
document.getElementById("graph").innerHTML = out;

// level meter scale, every third tick is long
let ticks = "";
for (let i = 0; i <= 60; i++) {
  const x = (i / 60) * 100 + "%";
  ticks += `<line x1="${x}" x2="${x}" y1="1" y2="${i % 3 ? 4 : 6}" stroke="#8a8a8a"/>`;
}
document.getElementById("levelScale").innerHTML = ticks;
```
